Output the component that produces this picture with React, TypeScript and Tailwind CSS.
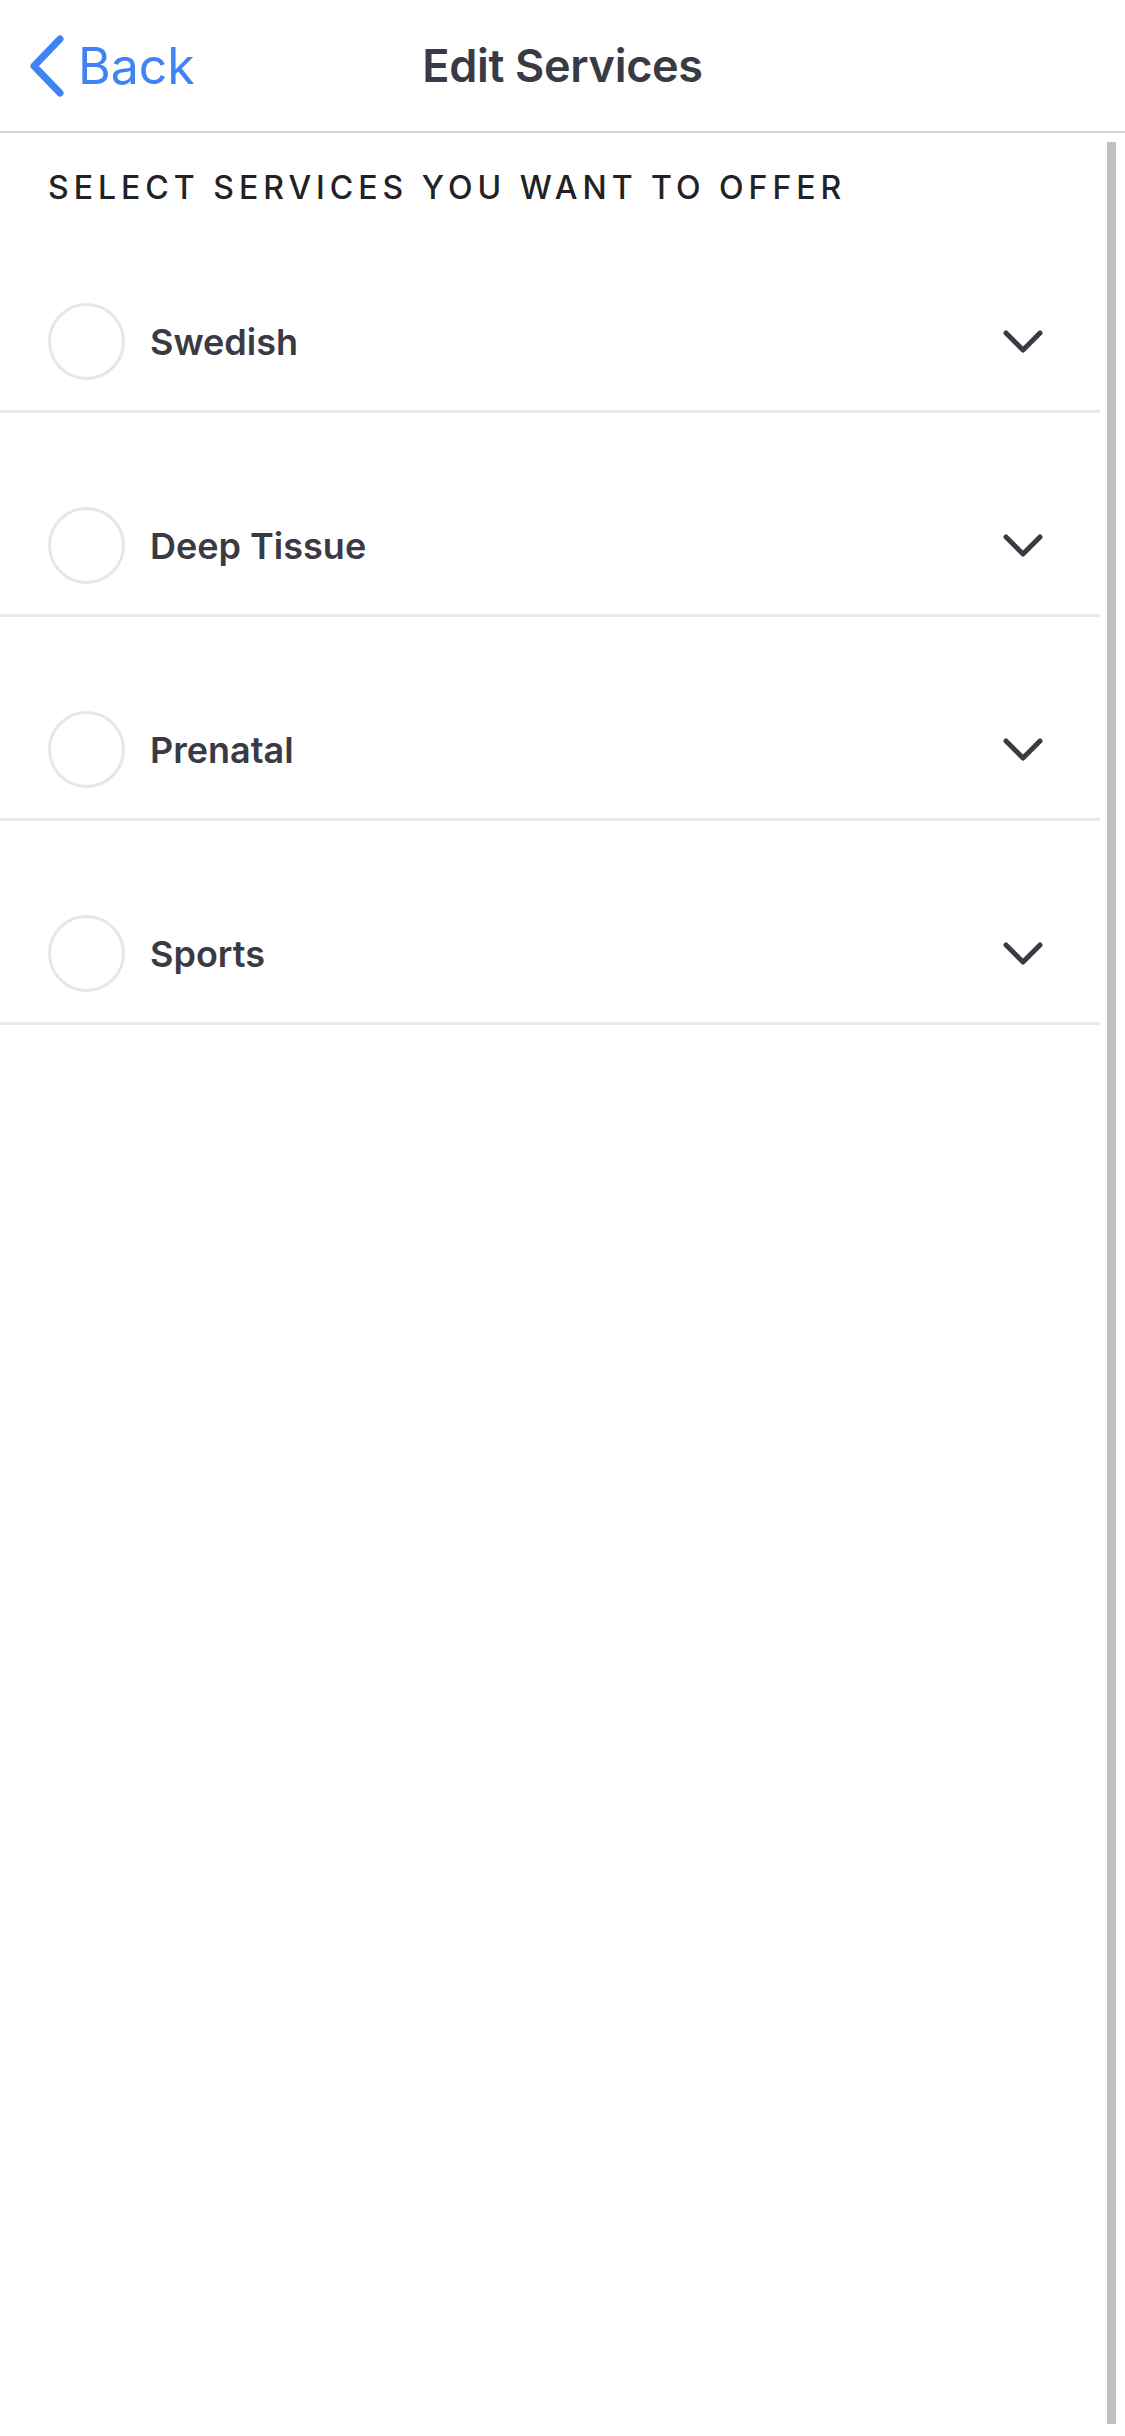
const services = ["Swedish", "Deep Tissue", "Prenatal", "Sports"];

function ServiceRow({ name }: { name: string }) {
  return (
    <div className="mt-[64px] h-[140px] flex items-center border-b-[3px] border-[#e6e9ee] pl-[48px] pr-[57px]">
      <div className="w-[77px] h-[77px] rounded-full border-[3px] border-[#e4e8ee] shrink-0" />
      <span className="ml-[25px] flex-1 text-[36px] font-semibold text-[#3a3a44]">{name}</span>
      <svg width="40" height="24" viewBox="0 0 40 24" fill="none" className="shrink-0">
        <polyline points="3,3 20,20 37,3" stroke="#3a3a44" strokeWidth="5" strokeLinecap="round" strokeLinejoin="round" />
      </svg>
    </div>
  );
}

export default function App() {
  return (
    <div className="w-[1125px] h-[2436px] bg-white flex flex-col font-['Inter',sans-serif]">
      <header className="h-[133px] shrink-0 grid grid-cols-[1fr_auto_1fr] items-center border-b-2 border-[#d4d4d8]">
        <div className="flex items-center pl-[28px] text-[#3f83f5]">
          <svg width="38" height="64" viewBox="0 0 38 64" fill="none">
            <polyline points="32,5 6,32 32,59" stroke="#3f83f5" strokeWidth="7" strokeLinecap="round" strokeLinejoin="round" />
          </svg>
          <span className="ml-[12px] text-[50px] leading-none">Back</span>
        </div>
        <h1 className="text-[45px] font-semibold text-[#3a3a44] tracking-[-0.3px] leading-none">Edit Services</h1>
        <div />
      </header>
      <div className="flex flex-1 min-h-0">
        <main className="w-[1100px] shrink-0">
          <div className="pt-[35px] pl-[48px] h-[76px]">
            <p className="text-[32px] leading-[40px] font-medium tracking-[5px] text-[#222226]">SELECT SERVICES YOU WANT TO OFFER</p>
          </div>
          {services.map((s) => (
            <ServiceRow key={s} name={s} />
          ))}
        </main>
        <div className="ml-[7px] mt-[9px] mb-[12px] w-[9px] bg-[#c0c0c0]" />
      </div>
    </div>
  );
}
